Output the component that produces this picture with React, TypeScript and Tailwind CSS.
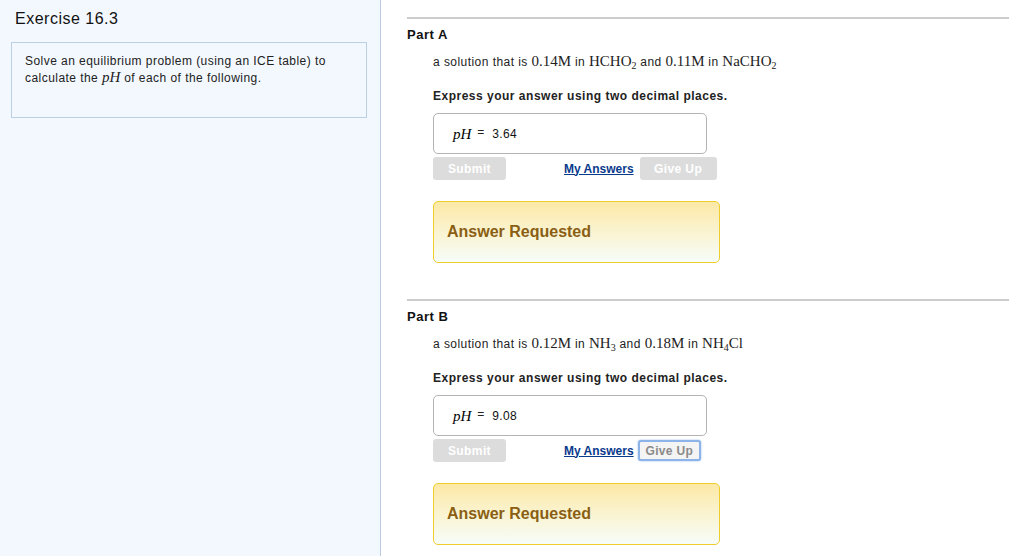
import React from 'react';

const sans = { fontFamily: '"Liberation Sans", Arial, sans-serif' };

// inline math, rendered in a serif face like MathJax output
const M: React.FC<{ children: React.ReactNode; italic?: boolean }> = ({ children, italic }) => (
  <span
    className={`font-['Liberation_Serif',serif] text-[15px] leading-[12px] tracking-normal ${italic ? 'italic' : ''}`}
  >
    {children}
  </span>
);

const Sub: React.FC<{ children: React.ReactNode }> = ({ children }) => (
  <span className="text-[10px] leading-[10px] relative top-[3px]">{children}</span>
);

interface PartProps {
  title: string;
  question: React.ReactNode;
  value: string;
  focused?: boolean;
}

const Part: React.FC<PartProps> = ({ title, question, value, focused }) => (
  <section className="pb-[36px]">
    <div className="h-[2px] bg-[#cccccc]" />
    <h2 className="mt-[8px] text-[13px] leading-[16px] tracking-[0.5px] font-bold text-[#111]">{title}</h2>
    <div className="pl-[26px]">
      <p className="mt-[11px] h-[16px] text-[12px] leading-[16px] tracking-[0.45px] text-[#222]">{question}</p>
      <p className="mt-[18px] text-[12px] leading-[16px] tracking-[0.5px] font-bold text-[#222]">
        Express your answer using two decimal places.
      </p>

      <div className="mt-[9px] w-[274px] h-[41px] border border-[#b4b4b4] rounded-[5px] bg-white flex items-center pl-[19px]">
        <M italic>pH</M>
        <span className="ml-[6px] text-[12px] text-[#222] relative -top-[2px]">=</span>
        <span className="ml-[8px] text-[12px] tracking-[0.3px] text-[#111]">{value}</span>
      </div>

      <div className="mt-[3px] flex items-center h-[23px]">
        <button className="w-[73px] h-[23px] rounded-[3px] bg-[#dcdcdc] text-white text-[12px] tracking-[0.4px] font-bold">
          Submit
        </button>
        <a className="ml-[58px] text-[12px] font-bold text-[#0a3a8c] underline cursor-pointer">My Answers</a>
        {focused ? (
          <button className="ml-[4px] h-[21px] px-[6px] rounded-[3px] bg-[#f4f4f4] text-[#8a8a8a] text-[12px] tracking-[0.3px] font-bold border-2 border-[#8cb4e8] shadow-[0_0_2px_#8cb4e8]">
            Give Up
          </button>
        ) : (
          <button className="ml-[6px] w-[77px] h-[23px] rounded-[3px] bg-[#dcdcdc] text-white text-[12px] tracking-[0.4px] font-bold">
            Give Up
          </button>
        )}
      </div>

      <div className="mt-[21px] w-[287px] h-[62px] rounded-[5px] border border-[#efcd2c] bg-gradient-to-b from-[#fde9a6] to-[#f6fdf9] flex items-center pl-[13px]">
        <span className="text-[16px] font-bold text-[#8a5f14]">Answer Requested</span>
      </div>
    </div>
  </section>
);

export default function App() {
  return (
    <div style={sans} className="flex h-screen overflow-hidden bg-white">
      <aside className="w-[381px] shrink-0 bg-[#f3f8fe] border-r border-[#b9cde2] pt-[9px]">
        <h1 className="pl-[15px] text-[16px] leading-[20px] tracking-[0.5px] text-[#111]">Exercise 16.3</h1>
        <div className="mt-[13px] ml-[11px] w-[356px] h-[76px] border border-[#bcd0e4] pt-[10px] pl-[13px]">
          <p className="text-[12px] leading-[17px] tracking-[0.45px] text-[#222]">
            Solve an equilibrium problem (using an ICE table) to
            <br />
            calculate the <M italic>pH</M> of each of the following.
          </p>
        </div>
      </aside>

      <main className="flex-1 pl-[26px] pt-[17px]">
        <Part
          title="Part A"
          value="3.64"
          question={
            <>
              a solution that is <M>0.14M</M> in <M>HCHO<Sub>2</Sub></M> and <M>0.11M</M> in{' '}
              <M>NaCHO<Sub>2</Sub></M>
            </>
          }
        />
        <Part
          title="Part B"
          value="9.08"
          focused
          question={
            <>
              a solution that is <M>0.12M</M> in <M>NH<Sub>3</Sub></M> and <M>0.18M</M> in{' '}
              <M>NH<Sub>4</Sub>Cl</M>
            </>
          }
        />
      </main>
    </div>
  );
}
